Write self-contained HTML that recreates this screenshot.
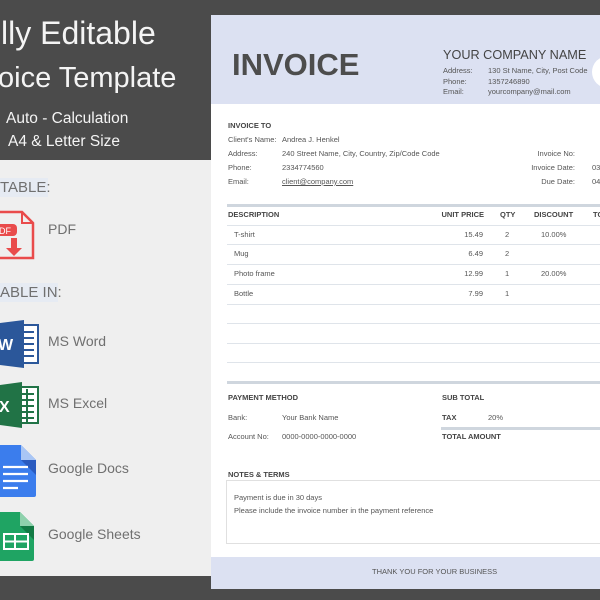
<!DOCTYPE html>
<html><head><meta charset="utf-8"><style>
*{margin:0;padding:0;box-sizing:border-box}
body{width:600px;height:600px;overflow:hidden;background:#4b4b4b;position:relative;font-family:"Liberation Sans",sans-serif}
.a{position:absolute;white-space:nowrap}
.w{color:#f4f4f4}
.l{color:#707070;font-size:14px}
.s{font-size:7.5px;color:#555;line-height:10px}
.b{font-weight:bold;color:#444;font-size:7.5px;line-height:10px}
.ln{position:absolute;left:227px;width:373px;height:1px;background:#dfe4ea}
.r{text-align:right}
</style></head><body>
<div class="a" style="left:0;top:160px;width:211px;height:416px;background:#efefef"></div>
<div class="a w" style="left:1px;top:15px;font-size:32px">lly Editable</div>
<div class="a w" style="left:-2px;top:62px;font-size:29px">oice Template</div>
<div class="a w" style="left:6px;top:110px;font-size:15.5px">Auto - Calculation</div>
<div class="a w" style="left:8px;top:133px;font-size:15.5px">A4 &amp; Letter Size</div>
<div class="a" style="left:0;top:178px;width:48px;height:19px;background:#e6ebf3"></div>
<div class="a l" style="left:0;top:179px;font-size:15px">TABLE:</div>
<div class="a" style="left:0;top:283px;width:58px;height:19px;background:#e6ebf3"></div>
<div class="a l" style="left:0;top:284px;font-size:15px">ABLE IN:</div>
<svg class="a" style="left:0;top:210px" width="36" height="54"><path d="M-6 2H22L33 13V48H-6" fill="none" stroke="#e94b4b" stroke-width="2.5"/><path d="M22 2V13H33" fill="none" stroke="#e94b4b" stroke-width="2"/><rect x="-6" y="14" width="23" height="12" rx="4" fill="#e94b4b"/><text x="-1" y="24" font-size="9" fill="#fff" font-family="Liberation Sans">DF</text><path d="M11 28H17V38H22L14 46 6 38H11Z" fill="#e94b4b"/></svg>
<div class="a l" style="left:48px;top:221px">PDF</div>
<svg class="a" style="left:0;top:320px" width="40" height="48"><rect x="14" y="5" width="24" height="38" fill="#fff" stroke="#2b579a" stroke-width="2"/><g stroke="#2b579a" stroke-width="2"><path d="M19 12H34M19 18H34M19 24H34M19 30H34M19 36H34"/></g><path d="M0 3L24 0V48L0 45Z" fill="#2b579a"/><text x="-2" y="30" font-size="16" font-weight="bold" fill="#fff" font-family="Liberation Sans">W</text></svg>
<div class="a l" style="left:48px;top:333px">MS Word</div>
<svg class="a" style="left:0;top:382px" width="40" height="46"><rect x="14" y="5" width="24" height="36" fill="#fff" stroke="#217346" stroke-width="2"/><g stroke="#217346" stroke-width="2"><path d="M19 12H34M19 18H34M19 24H34M19 30H34M19 36H34M27 7V40"/></g><path d="M0 3L22 0V46L0 43Z" fill="#217346"/><text x="-1" y="30" font-size="16" font-weight="bold" fill="#fff" font-family="Liberation Sans">X</text></svg>
<div class="a l" style="left:48px;top:395px">MS Excel</div>
<svg class="a" style="left:0;top:445px" width="38" height="54"><path d="M0 0H21L36 15V50Q36 52 34 52H0Z" fill="#3b7ded"/><path d="M21 0V15H36Z" fill="#a9c6f5"/><path d="M21 15L36 30V15Z" fill="#2a5bc0"/><g stroke="#fff" stroke-width="2.2"><path d="M3 22H28M3 29H28M3 36H28M3 43H18"/></g></svg>
<div class="a l" style="left:48px;top:460px">Google Docs</div>
<svg class="a" style="left:0;top:512px" width="38" height="50"><path d="M0 0H20L34 14V47Q34 49 32 49H0Z" fill="#1fa463"/><path d="M20 0V14H34Z" fill="#8ed1ac"/><path d="M20 14L34 28V14Z" fill="#127a44"/><rect x="4" y="22" width="24" height="15" fill="none" stroke="#fff" stroke-width="2"/><path d="M4 29.5H28M15 22V37" stroke="#fff" stroke-width="2"/></svg>
<div class="a l" style="left:48px;top:526px">Google Sheets</div>

<div class="a" style="left:211px;top:15px;width:389px;height:574px;background:#fff"></div>
<div class="a" style="left:211px;top:15px;width:389px;height:89px;background:#dce1f2"></div>
<div class="a" style="left:592px;top:56px;width:32px;height:32px;border-radius:50%;background:#fff"></div>
<div class="a" style="left:232px;top:47px;font-size:31px;font-weight:bold;color:#4d4d4d">INVOICE</div>
<div class="a" style="left:443px;top:48px;font-size:12.7px;color:#444">YOUR COMPANY NAME</div>
<div class="a s" style="left:443px;top:66px">Address:</div><div class="a s" style="left:488px;top:66px">130 St Name, City, Post Code</div>
<div class="a s" style="left:443px;top:77px">Phone:</div><div class="a s" style="left:488px;top:77px">1357246890</div>
<div class="a s" style="left:443px;top:87px">Email:</div><div class="a s" style="left:488px;top:87px">yourcompany@mail.com</div>

<div class="a b" style="left:228px;top:121px">INVOICE TO</div>
<div class="a s" style="left:228px;top:135px">Client's Name:</div><div class="a s" style="left:282px;top:135px">Andrea J. Henkel</div>
<div class="a s" style="left:228px;top:149px">Address:</div><div class="a s" style="left:282px;top:149px">240 Street Name, City, Country, Zip/Code Code</div>
<div class="a s" style="left:228px;top:163px">Phone:</div><div class="a s" style="left:282px;top:163px">2334774560</div>
<div class="a s" style="left:228px;top:177px">Email:</div><div class="a s" style="left:282px;top:177px"><u>client@company.com</u></div>
<div class="a s r" style="left:500px;top:149px;width:75px">Invoice No:</div>
<div class="a s r" style="left:500px;top:163px;width:75px">Invoice Date:</div>
<div class="a s r" style="left:500px;top:177px;width:75px">Due Date:</div>
<div class="a s" style="left:592px;top:163px">03</div>
<div class="a s" style="left:592px;top:177px">04</div>

<div class="ln" style="top:204px;height:3px;background:#cfd6de"></div>
<div class="a b" style="left:228px;top:210px">DESCRIPTION</div>
<div class="a b r" style="left:420px;top:210px;width:64px">UNIT PRICE</div>
<div class="a b" style="left:500px;top:210px">QTY</div>
<div class="a b" style="left:534px;top:210px">DISCOUNT</div>
<div class="a b" style="left:593px;top:210px">TO</div>
<div class="ln" style="top:225px"></div>
<div class="ln" style="top:244px"></div>
<div class="ln" style="top:264px"></div>
<div class="ln" style="top:284px"></div>
<div class="ln" style="top:304px"></div>
<div class="ln" style="top:323px"></div>
<div class="ln" style="top:343px"></div>
<div class="ln" style="top:362px"></div>
<div class="ln" style="top:381px;height:3px;background:#cfd6de"></div>
<div class="a s" style="left:234px;top:230px">T-shirt</div><div class="a s r" style="left:440px;top:230px;width:43px">15.49</div><div class="a s" style="left:505px;top:230px">2</div><div class="a s" style="left:541px;top:230px">10.00%</div>
<div class="a s" style="left:234px;top:249px">Mug</div><div class="a s r" style="left:440px;top:249px;width:43px">6.49</div><div class="a s" style="left:505px;top:249px">2</div>
<div class="a s" style="left:234px;top:269px">Photo frame</div><div class="a s r" style="left:440px;top:269px;width:43px">12.99</div><div class="a s" style="left:505px;top:269px">1</div><div class="a s" style="left:541px;top:269px">20.00%</div>
<div class="a s" style="left:234px;top:289px">Bottle</div><div class="a s r" style="left:440px;top:289px;width:43px">7.99</div><div class="a s" style="left:505px;top:289px">1</div>

<div class="a b" style="left:228px;top:393px">PAYMENT METHOD</div>
<div class="a s" style="left:228px;top:413px">Bank:</div><div class="a s" style="left:282px;top:413px">Your Bank Name</div>
<div class="a s" style="left:228px;top:432px">Account No:</div><div class="a s" style="left:282px;top:432px">0000-0000-0000-0000</div>
<div class="a b" style="left:442px;top:393px">SUB TOTAL</div>
<div class="a b" style="left:442px;top:413px">TAX</div>
<div class="a s" style="left:488px;top:413px">20%</div>
<div class="a" style="left:441px;top:427px;width:159px;height:3px;background:#cfd6de"></div>
<div class="a b" style="left:442px;top:432px">TOTAL AMOUNT</div>

<div class="a b" style="left:228px;top:470px">NOTES &amp; TERMS</div>
<div class="a" style="left:226px;top:480px;width:380px;height:64px;border:1px solid #e0e0e0"></div>
<div class="a s" style="left:234px;top:493px">Payment is due in 30 days</div>
<div class="a s" style="left:234px;top:506px">Please include the invoice number in the payment reference</div>

<div class="a" style="left:211px;top:557px;width:389px;height:32px;background:#dce1f2"></div>
<div class="a s" style="left:372px;top:567px">THANK YOU FOR YOUR BUSINESS</div>
</body></html>
